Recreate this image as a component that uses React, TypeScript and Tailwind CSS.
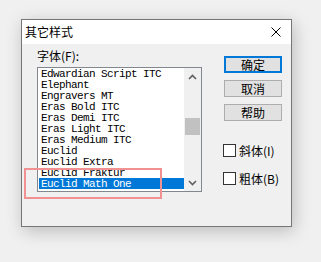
import React from 'react';

const fonts = [
  'Edwardian Script ITC',
  'Elephant',
  'Engravers MT',
  'Eras Bold ITC',
  'Eras Demi ITC',
  'Eras Light ITC',
  'Eras Medium ITC',
  'Euclid',
  'Euclid Extra',
  'Euclid Fraktur',
  'Euclid Math One',
];

const cjk = "font-['Noto_Sans_CJK_SC',sans-serif]";

function Button({ label, primary }: { label: string; primary?: boolean }) {
  return (
    <div
      className={`w-[58px] h-[17px] bg-[#e1e1e1] flex items-center justify-center text-[12px] leading-none text-black ${cjk} ${
        primary ? 'border-2 border-[#0078d7]' : 'border border-[#adadad]'
      }`}
    >
      {label}
    </div>
  );
}

function Check({ label }: { label: string }) {
  return (
    <div className="flex items-center gap-[3px] h-[13px]">
      <div className="w-[13px] h-[13px] border border-[#333333] bg-white" />
      <span className={`text-[12px] leading-none text-black ${cjk}`}>{label}</span>
    </div>
  );
}

export default function App() {
  return (
    <div className="relative w-[321px] h-[262px] overflow-hidden bg-[#f0f0f0] pl-[21px] pt-[19px]">
      {/* dialog window */}
      <div className="w-[271px] h-[208px] border border-[#767676] bg-[#f0f0f0] shadow-[2px_4px_16px_rgba(0,0,0,0.22)] flex flex-col">
        {/* title bar */}
        <div className="h-[24px] bg-white flex items-center justify-between pl-[3px] pr-[10px]">
          <span className={`text-[12px] leading-none text-black ${cjk}`}>其它样式</span>
          <svg width="10" height="10" viewBox="0 0 10 10">
            <path d="M0.5 0.5L9.5 9.5M9.5 0.5L0.5 9.5" stroke="#000" strokeWidth="1" />
          </svg>
        </div>

        {/* body */}
        <div className="flex">
          <div className="pl-[15px] pt-[5px] flex flex-col">
            <div className={`h-[14px] flex items-center text-[12px] leading-none text-black ${cjk}`}>
              字体(F):
            </div>
            <div className="mt-[4px] w-[165px] h-[125px] border border-[#828790] bg-white flex">
              <div className="flex-1 flex flex-col">
                {fonts.map((f, i) => {
                  const selected = i === fonts.length - 1;
                  return (
                    <div
                      key={f}
                      className={`h-[11px] ml-[1px] pl-[2px] pt-[1px] flex items-center whitespace-nowrap overflow-hidden font-['Liberation_Mono',monospace] text-[11px] tracking-[-0.6px] leading-none ${
                        selected ? 'bg-[#0078d7] text-white' : 'text-black'
                      }`}
                    >
                      {f}
                    </div>
                  );
                })}
              </div>
              {/* scrollbar */}
              <div className="w-[17px] bg-[#f0f0f0] flex flex-col items-center">
                <div className="h-[17px] flex items-center justify-center">
                  <svg width="9" height="6" viewBox="0 0 9 6">
                    <path d="M1 5L4.5 1.5L8 5" fill="none" stroke="#606060" strokeWidth="1.6" />
                  </svg>
                </div>
                <div className="mt-[33px] w-[15px] h-[17px] bg-[#c1c1c1]" />
                <div className="flex-1" />
                <div className="h-[17px] flex items-center justify-center">
                  <svg width="9" height="6" viewBox="0 0 9 6">
                    <path d="M1 1L4.5 4.5L8 1" fill="none" stroke="#606060" strokeWidth="1.6" />
                  </svg>
                </div>
              </div>
            </div>
          </div>

          <div className="ml-[22px] pt-[12px] flex flex-col">
            <div className="flex flex-col gap-[7px]">
              <Button label="确定" primary />
              <Button label="取消" />
              <Button label="帮助" />
            </div>
            <div className="mt-[23px] -ml-[1px] flex flex-col gap-[15px]">
              <Check label="斜体(I)" />
              <Check label="粗体(B)" />
            </div>
          </div>
        </div>
      </div>

      {/* red annotation box */}
      <div className="absolute left-[24px] top-[168px] w-[138px] h-[31px] border-2 border-[#f19191]" />
    </div>
  );
}
